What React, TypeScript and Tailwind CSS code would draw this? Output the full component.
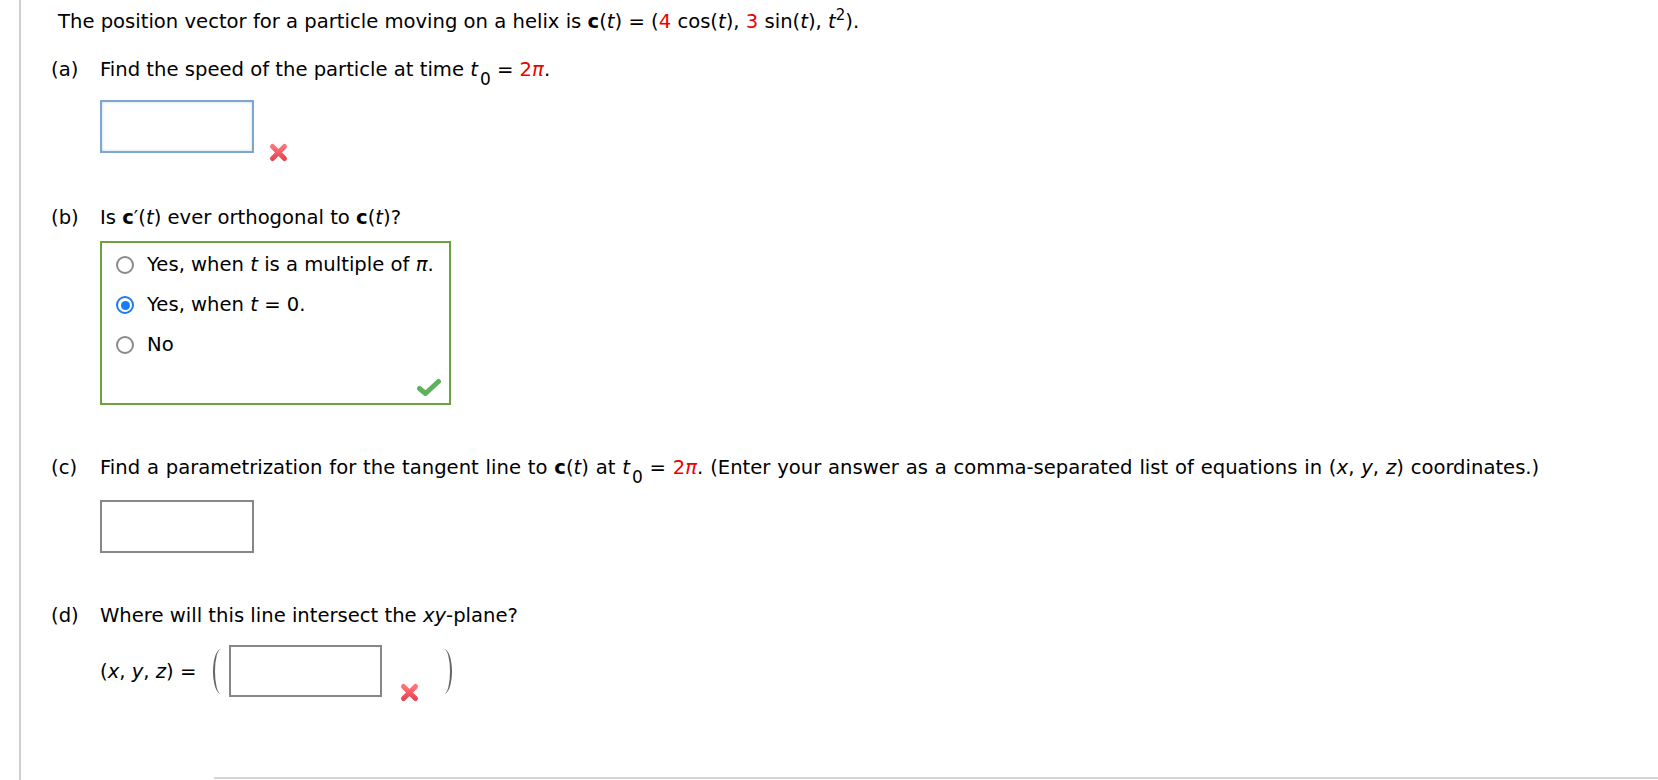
import React from "react";

const red = "text-[#f00000]";

function T() {
  return <i>t</i>;
}

function Bc() {
  return <b className="font-bold">c</b>;
}

function Sub0() {
  return (
    <span>
      <i>t</i>
      <span className="relative top-[9px] ml-[2px] text-[17px]">0</span>
    </span>
  );
}

function WrongMark() {
  return (
    <svg width="21" height="21" viewBox="0 0 21 21" className="shrink-0">
      <defs>
        <linearGradient id="xg" x1="0" y1="0" x2="0" y2="1">
          <stop offset="0" stopColor="#ff737a" />
          <stop offset="1" stopColor="#ea4652" />
        </linearGradient>
      </defs>
      <path d="M4.5 4.5 L16.5 16.5 M16.5 4.5 L4.5 16.5" stroke="url(#xg)" strokeWidth="5" strokeLinecap="round" />
    </svg>
  );
}

function CheckMark() {
  return (
    <svg width="26" height="19" viewBox="0 0 26 19">
      <path d="M3.5 10.5 L9.5 15.5 L22.5 3.5" fill="none" stroke="#5cb35c" strokeWidth="5" strokeLinecap="round" strokeLinejoin="round" />
    </svg>
  );
}

function Radio({ checked }: { checked?: boolean }) {
  if (checked) {
    return (
      <span className="flex h-[18px] w-[18px] shrink-0 items-center justify-center rounded-full border-[2px] border-[#1a7bf2] bg-white">
        <span className="h-[9px] w-[9px] rounded-full bg-[#1a7bf2]" />
      </span>
    );
  }
  return <span className="h-[18px] w-[18px] shrink-0 rounded-full border-[2px] border-[#8a8a8a] bg-white" />;
}

function Part({ label, children }: { label: string; children: React.ReactNode }) {
  return (
    <div className="flex h-[24px] items-center">
      <span className="w-[49px] shrink-0">{label}</span>
      <span className="whitespace-nowrap">{children}</span>
    </div>
  );
}

export default function App() {
  return (
    <div
      className="flex h-[780px] w-full overflow-hidden bg-white text-[19.6px] leading-[24px] text-black"
      style={{ fontFamily: '"DejaVu Sans", Verdana, sans-serif' }}
    >
      <div className="w-[19px] shrink-0" />
      <div className="flex grow flex-col border-l-2 border-[#cfcfcf] pl-[30px] pt-[10px]">
        <p className="ml-[7px] h-[24px] whitespace-nowrap">
          The position vector for a particle moving on a helix is <Bc />(<T />) = (
          <span className={red}>4</span> cos(<T />), <span className={red}>3</span> sin(<T />), <T />
          <sup className="top-[-8px] text-[15px]">2</sup>).
        </p>

        <div className="mt-[24px]">
          <Part label="(a)">
            Find the speed of the particle at time <Sub0 /> = <span className={red}>2<i>π</i></span>.
          </Part>
          <div className="ml-[49px] mt-[18px] flex items-end gap-[14px]">
            <div className="h-[53px] w-[154px] border-2 border-[#7fa6cf] bg-white shadow-[inset_0_0_3px_rgba(120,160,210,0.45)]" />
            <div className="mb-[-10px]">
              <WrongMark />
            </div>
          </div>

          <div className="mt-[53px]">
            <Part label="(b)">
              Is <Bc />′(<T />) ever orthogonal to <Bc />(<T />)?
            </Part>
          </div>
          <div className="ml-[49px] mt-[11px] flex h-[164px] w-[351px] flex-col border-2 border-[#6aa33e] pt-[2px]">
            <div className="flex h-[40px] items-center gap-[13px] pl-[14px]">
              <Radio />
              <span>
                Yes, when <T /> is a multiple of <i>π</i>.
              </span>
            </div>
            <div className="flex h-[40px] items-center gap-[13px] pl-[14px]">
              <Radio checked />
              <span>
                Yes, when <T /> = 0.
              </span>
            </div>
            <div className="flex h-[40px] items-center gap-[13px] pl-[14px]">
              <Radio />
              <span>No</span>
            </div>
            <div className="mt-[13px] flex justify-end pr-[7px]">
              <CheckMark />
            </div>
          </div>

          <div className="mt-[51px]">
            <Part label="(c)">
              <span className="[word-spacing:0.6px]">
                Find a parametrization for the tangent line to <Bc />(<T />) at <Sub0 /> ={" "}
                <span className={red}>2<i>π</i></span>. (Enter your answer as a comma-separated list of equations in (
                <i>x</i>, <i>y</i>, <i>z</i>) coordinates.)
              </span>
            </Part>
          </div>
          <div className="ml-[49px] mt-[20px] h-[53px] w-[154px] border-2 border-[#878787] bg-white" />

          <div className="mt-[51px]">
            <Part label="(d)">
              Where will this line intersect the <i>xy</i>-plane?
            </Part>
          </div>
          <div className="ml-[49px] mt-[17px] flex h-[52px] items-center">
            <span className="relative top-[1px] w-[113px] whitespace-nowrap">
              (<i>x</i>, <i>y</i>, <i>z</i>) =
            </span>
            <span className="h-[45px] w-[16px] shrink-0 rounded-[50%] border-l-[2px] border-[#666]" />
            <div className="h-[52px] w-[153px] border-2 border-[#878787] bg-white" />
            <div className="ml-[17px] mt-[42px]">
              <WrongMark />
            </div>
            <span className="ml-[16px] h-[45px] w-[16px] shrink-0 rounded-[50%] border-r-[2px] border-[#666]" />
          </div>

          <div className="ml-[163px] mt-[80px] border-t-2 border-[#d4d4d4]" />
        </div>
      </div>
    </div>
  );
}
